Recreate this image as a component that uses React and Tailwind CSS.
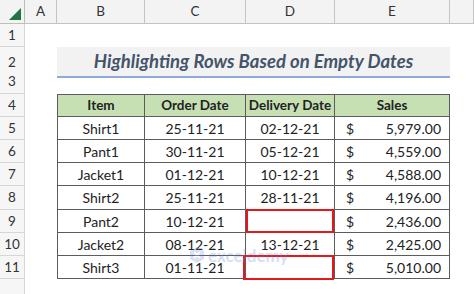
import React from 'react'

const cols = ['A', 'B', 'C', 'D', 'E', '']

const data = [
  { item: 'Shirt1', order: '25-11-21', delivery: '02-12-21', sales: '5,979.00' },
  { item: 'Pant1', order: '30-11-21', delivery: '05-12-21', sales: '4,559.00' },
  { item: 'Jacket1', order: '01-12-21', delivery: '10-12-21', sales: '4,588.00' },
  { item: 'Shirt2', order: '25-11-21', delivery: '28-11-21', sales: '4,196.00' },
  { item: 'Pant2', order: '10-12-21', delivery: '', sales: '2,436.00', mark: 'a' },
  { item: 'Jacket2', order: '08-12-21', delivery: '13-12-21', sales: '2,425.00' },
  { item: 'Shirt3', order: '01-11-21', delivery: '', sales: '5,010.00', mark: 'b' },
]

const grid = 'grid grid-cols-[25px_32px_88px_101px_89px_115px_1fr]'
const rowHead = 'flex items-center justify-center border-r border-b border-[#d6d6d6] bg-[#f6f6f6] text-[13.5px] text-[#333]'
const cell = 'flex items-center justify-center border-r border-b border-[#5c5c5c]'

function RowNum({ n }) {
  return <div className={rowHead}>{n}</div>
}

export default function App() {
  return (
    <div
      className="relative h-[294px] w-[474px] overflow-hidden bg-white text-[#222]"
      style={{ fontFamily: 'Lato, "Noto Sans", sans-serif' }}
    >
      {/* Column headers */}
      <div className={`${grid} h-[24px]`}>
        <div className="relative border-r border-b border-[#bdbdbd] bg-[#f3f3f3]">
          <div className="absolute bottom-[3px] right-[3px] h-0 w-0 border-b-[12px] border-l-[12px] border-b-[#217346] border-l-transparent" />
        </div>
        {cols.map((c, i) => (
          <div
            key={i}
            className="flex items-center justify-center border-r border-b border-[#c4c4c4] bg-[#f3f3f3] text-[13.5px] text-[#333]"
          >
            {c}
          </div>
        ))}
      </div>

      {/* Row 1 */}
      <div className={`${grid} h-[23px]`}>
        <RowNum n={1} />
      </div>

      {/* Row 2: title */}
      <div className={`${grid} h-[23px]`}>
        <RowNum n={2} />
        <div />
        <div className="col-span-4 flex items-center justify-center border-b-2 border-[#8faadc] bg-[#f2f2f2] pt-[1px] text-[18.5px] font-bold italic text-[#44546a]">
          Highlighting Rows Based on Empty Dates
        </div>
      </div>

      {/* Row 3 */}
      <div className={`${grid} h-[24px]`}>
        <RowNum n={3} />
      </div>

      {/* Row 4: table header */}
      <div className={`${grid} h-[23px]`}>
        <RowNum n={4} />
        <div />
        <div className={`${cell} border-l border-t bg-[#c6e0b4] text-[13.5px] font-bold`}>Item</div>
        <div className={`${cell} border-t bg-[#c6e0b4] text-[13.5px] font-bold`}>Order Date</div>
        <div className={`${cell} border-t bg-[#c6e0b4] text-[13.5px] font-bold`}>Delivery Date</div>
        <div className={`${cell} border-t bg-[#c6e0b4] text-[13.5px] font-bold`}>Sales</div>
      </div>

      {/* Data rows */}
      {data.map((r, i) => (
        <div key={r.item} className={`${grid} ${i === 3 ? 'h-[24px]' : 'h-[23px]'}`}>
          <RowNum n={i + 5} />
          <div />
          <div className={`${cell} border-l text-[14px]`}>{r.item}</div>
          <div className={`${cell} text-[14px]`}>{r.order}</div>
          <div className={`${cell} relative text-[14px]`}>
            {r.delivery}
            {r.mark === 'a' && (
              <div className="absolute inset-x-0 -top-px -bottom-px border-[2.5px] border-[#e8171b]" />
            )}
            {r.mark === 'b' && (
              <div className="absolute -left-[3px] right-0 -top-px -bottom-[2px] border-[2.5px] border-[#e8171b]" />
            )}
          </div>
          <div className="flex items-center justify-between border-r border-b border-[#5c5c5c] pl-[11px] pr-[8px] text-[14px]">
            <span>$</span>
            <span>{r.sales}</span>
          </div>
        </div>
      ))}

      {/* Row 12 (partial) */}
      <div className={`${grid} h-[23px]`}>
        <RowNum n="" />
      </div>

      {/* Watermark */}
      <div className="pointer-events-none absolute left-[188px] top-[246px] flex items-center gap-[2px] opacity-25">
        <svg width="18" height="18" viewBox="0 0 18 18">
          <path d="M9 1 L16 5 L16 13 L9 17 L2 13 L2 5 Z" fill="#6b8fd6" />
          <path d="M6 6 L12 12 M12 6 L6 12" stroke="#fff" strokeWidth="2" />
        </svg>
        <span className="text-[17px] font-bold leading-none text-[#5a7fd0]">exceldemy</span>
      </div>
    </div>
  )
}
